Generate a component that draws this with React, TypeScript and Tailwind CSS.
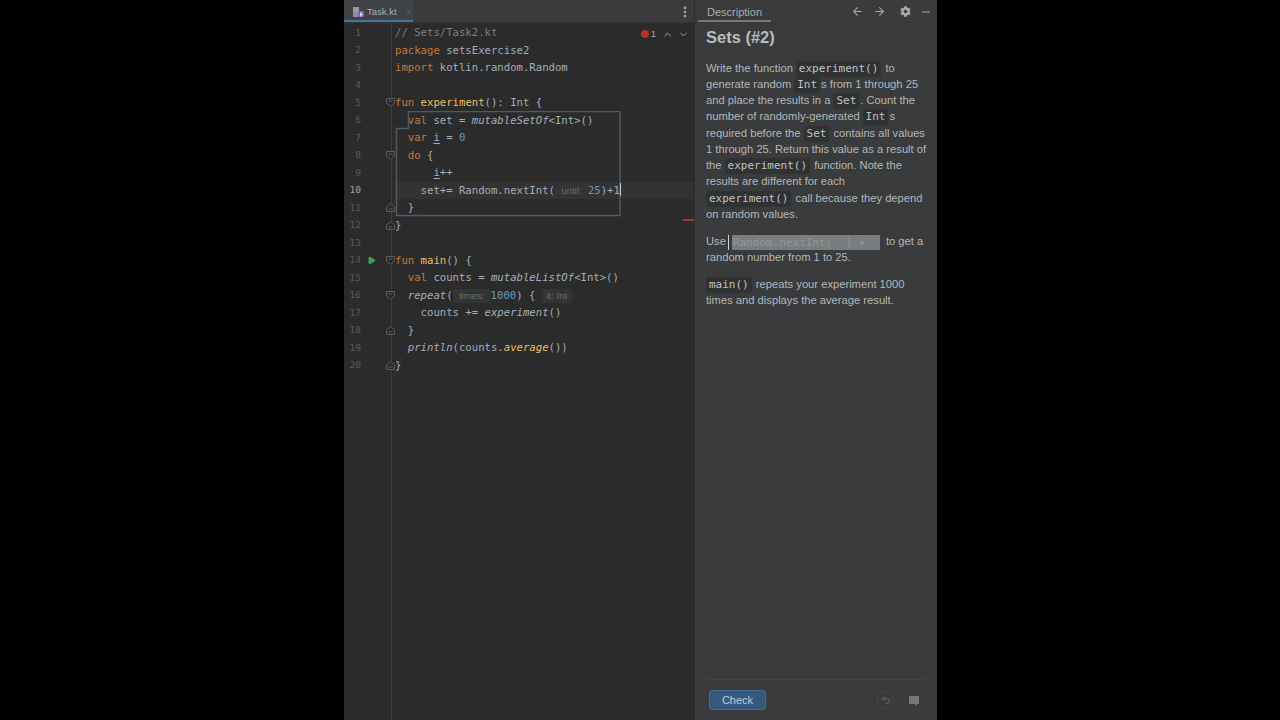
import type { ReactNode } from "react";
import { ArrowLeft, ArrowRight, Minus, MoreVertical, ChevronUp, ChevronDown, Undo2, X, Play } from "lucide-react";
import { FaCog } from "react-icons/fa";

const kw = "text-[#c07a3c]";
const fn = "text-[#e8bf6a]";

function K({ children }: { children: ReactNode }) {
  return <span className={kw}>{children}</span>;
}

function I({ children }: { children: ReactNode }) {
  return <span className="italic">{children}</span>;
}

function U({ children }: { children: ReactNode }) {
  return <span className="underline underline-offset-2">{children}</span>;
}

function Hint({ w, children }: { w: string; children: string }) {
  return (
    <span className={`inline-block rounded-[2px] bg-[#333435] text-center font-['Liberation_Sans',sans-serif] text-[9.5px] leading-[14px] not-italic text-[#6c6f71] ${w}`}>
      {children}
    </span>
  );
}

function Fold({ kind }: { kind: "open" | "close" }) {
  return (
    <svg width="9" height="9" viewBox="0 0 9 9" className="bg-[#2b2b2b]" fill="none" stroke="#5a5d5f">
      {kind === "open" ? <path d="M.5.5h8v4.5L4.5 8.5.5 5zM2.5 3h4" /> : <path d="M.5 8.5h8V4L4.5.5.5 4zM2.5 6h4" />}
    </svg>
  );
}

type Line = { code?: ReactNode; fold?: "open" | "close"; run?: boolean; current?: boolean };

const lines: Line[] = [
  { code: <span className="text-[#7c7e80]">// Sets/Task2.kt</span> },
  { code: <><K>package</K> setsExercise2</> },
  { code: <><K>import</K> kotlin.random.Random</> },
  {},
  { code: <><K>fun</K> <span className={fn}>experiment</span>(): Int {"{"}</>, fold: "open" },
  { code: <>  <K>val</K> set = <I>mutableSetOf</I>{"<Int>()"}</> },
  { code: <>  <K>var</K> <U>i</U> = <span className="text-[#6897bb]">0</span></> },
  { code: <>  <K>do</K> {"{"}</>, fold: "open" },
  { code: <>      <U>i</U>++</> },
  {
    code: <>    set+= Random.nextInt(<Hint w="w-[33px]">until:</Hint><span className="text-[#6897bb]">25</span>)+1</>,
    current: true,
  },
  { code: <>  {"}"}</>, fold: "close" },
  { code: "}", fold: "close" },
  {},
  { code: <><K>fun</K> <span className={fn}>main</span>() {"{"}</>, fold: "open", run: true },
  { code: <>  <K>val</K> counts = <I>mutableListOf</I>{"<Int>()"}</> },
  {
    code: <>  <I>repeat</I>(<Hint w="w-[38px]">times:</Hint><span className="text-[#6897bb]">1000</span>) {"{"} <Hint w="w-[30px]">it: Int</Hint></>,
    fold: "open",
  },
  { code: <>    counts += <I>experiment</I>()</> },
  { code: <>  {"}"}</>, fold: "close" },
  { code: <>  <I>println</I>(counts.<I><span className={fn}>average</span></I>())</> },
  { code: "}", fold: "close" },
];

function CodeRow({ line, n }: { line: Line; n: number }) {
  return (
    <div className="flex h-[17.53px] items-center">
      <div className={`w-[17px] shrink-0 text-right text-[9.5px] ${line.current ? "text-[#a4a3a3]" : "text-[#565a5c]"}`}>{n}</div>
      <div className="flex w-[25px] shrink-0 items-center pl-[6px]">
        {line.run && <Play size={9} className="fill-[#499c54] text-[#499c54]" />}
      </div>
      <div className="flex w-[9px] shrink-0 items-center justify-center">{line.fold && <Fold kind={line.fold} />}</div>
      <div className={`h-full min-w-0 flex-1 whitespace-pre leading-[17.53px] text-[#a3afba] ${line.current ? "bg-[#323232]" : ""}`}>{line.code}</div>
    </div>
  );
}

function Code({ children }: { children: string }) {
  return (
    <code className="ml-[3px] mr-[1px] inline-block rounded-[3px] bg-[#2f3132] px-[3px] font-['DejaVu_Sans_Mono',monospace] text-[11px] leading-[16px] text-[#c0c3c5]">
      {children}
    </code>
  );
}

function TextLine({ children }: { children: ReactNode }) {
  return <div className="h-[16.25px] whitespace-pre leading-[16.25px]">{children}</div>;
}

export default function App() {
  return (
    <div className="flex h-[720px] overflow-hidden bg-black pl-[344px] font-['Liberation_Sans',sans-serif]">
      <div className="flex h-full w-[593px] bg-[#393b3c]">
        {/* editor */}
        <div className="relative flex w-[350px] shrink-0 flex-col bg-[#2b2b2b]">
          <div className="flex h-[23px] shrink-0 items-stretch justify-between border-b border-[#333536] bg-[#393b3d]">
            <div className="flex w-[69px] items-center gap-[3px] border-b-2 border-[#47729b] bg-[#404345] pl-[9px] pt-[4px]">
              <svg width="11" height="12" viewBox="0 0 11 12">
                <rect x="0" y="1" width="6" height="5" fill="#9a9ca0" />
                <rect x="0" y="6" width="5" height="5" fill="#8d8fa0" />
                <path d="M5 5h6v6H5z" fill="#8a5fc2" />
                <path d="M7 6l3 2.5L7 11z" fill="#d6d8e8" />
              </svg>
              <span className="text-[9.5px] text-[#a9adb0]">Task.kt</span>
              <X size={8} className="ml-[5px] text-[#5f6264]" />
            </div>
            <div className="flex items-center pr-[2px] pt-[1px]">
              <MoreVertical size={14} strokeWidth={2.5} className="text-[#a5a8aa]" />
            </div>
          </div>

          <div className="relative flex-1 pt-[1px] font-['DejaVu_Sans_Mono',monospace] text-[10.63px]">
            <div className="absolute bottom-0 left-[47px] top-0 w-px bg-[#3b3d3e]" />
            <div className="relative">
              {lines.map((line, i) => (
                <CodeRow key={i} line={line} n={i + 1} />
              ))}
            </div>
            {/* error counter */}
            <div className="absolute right-[5px] top-[4px] flex items-center text-[#a5a8aa]">
              <span className="h-[8px] w-[8px] rounded-full bg-[#b3312f]" />
              <span className="ml-[2px] font-['Liberation_Sans',sans-serif] text-[9.5px]">1</span>
              <ChevronUp size={11} className="ml-[6px]" />
              <ChevronDown size={11} className="ml-[5px]" />
            </div>
            {/* selection frame */}
            <svg className="absolute left-[50px] top-[88px]" width="230" height="106" fill="none">
              <path d="M14.5.5H226V104.5H2.5V17.5H14.5z" stroke="#4c5b63" strokeWidth="1.5" />
            </svg>
            <div className="absolute left-[276px] top-[160px] h-[13px] w-px bg-[#c5cbd0]" />
            <div className="absolute left-[72px] top-[192px] h-px w-[5px] bg-[#8a3a33]" />
            <div className="absolute right-0 top-[196px] h-[2px] w-[11px] bg-[#b5332c]" />
          </div>
        </div>

        <div className="w-px shrink-0 bg-[#2a2c2d]" />

        {/* description panel */}
        <div className="flex min-w-0 flex-1 flex-col text-[11.2px] text-[#b4b7b9]">
          <div className="flex h-[23px] shrink-0 items-center justify-between border-b border-[#333536] pl-[3px] pr-[5px]">
            <div className="flex h-full w-[73px] items-center justify-center border-b-2 border-[#777a7c] pt-[4px] text-[11px] text-[#a9acae]">
              Description
            </div>
            <div className="flex items-center pt-[1px] text-[#a5a8aa]">
              <ArrowLeft size={13} strokeWidth={2} />
              <ArrowRight size={13} strokeWidth={2} className="ml-[9px]" />
              <FaCog size={11} className="ml-[14px]" />
              <Minus size={12} strokeWidth={2} className="ml-[9px]" />
            </div>
          </div>

          <div className="flex-1 pl-[11px] pt-[4px]">
            <h1 className="text-[16.5px] font-bold leading-[21px] text-[#b9bcbe]">Sets (#2)</h1>
            <div className="mt-[11.5px]">
              <TextLine>Write the function<Code>experiment()</Code> to</TextLine>
              <TextLine>generate random<Code>Int</Code>s from 1 through 25</TextLine>
              <TextLine>and place the results in a<Code>Set</Code>. Count the</TextLine>
              <TextLine>number of randomly-generated<Code>Int</Code>s</TextLine>
              <TextLine>required before the<Code>Set</Code> contains all values</TextLine>
              <TextLine>1 through 25. Return this value as a result of</TextLine>
              <TextLine>the<Code>experiment()</Code> function. Note the</TextLine>
              <TextLine>results are different for each</TextLine>
              <div className="ml-[-3px]">
                <TextLine><Code>experiment()</Code> call because they depend</TextLine>
              </div>
              <TextLine>on random values.</TextLine>
            </div>
            <div className="mt-[11px]">
              <TextLine>
                Use
                <span className="ml-[2px] inline-block h-[15px] w-[1px] bg-[#d0d3d5] align-middle" />
                <code className="ml-[3px] mr-[6px] inline-block h-[15px] w-[148px] rounded-[1px] bg-[#7a7d7f] px-[1px] align-middle font-['DejaVu_Sans_Mono',monospace] text-[11px] leading-[15px] text-[#94979a]">
                  Random.nextInt(  ) +
                </code>
                to get a
              </TextLine>
              <TextLine>random number from 1 to 25.</TextLine>
            </div>
            <div className="mt-[10.5px]">
              <div className="ml-[-3px]">
                <TextLine><Code>main()</Code> repeats your experiment 1000</TextLine>
              </div>
              <TextLine>times and displays the average result.</TextLine>
            </div>
          </div>

          <div className="mx-[11px] flex h-[41px] shrink-0 items-center justify-between border-t border-[#414344] pl-[3px] pr-[6px]">
            <button className="h-[20px] w-[57px] rounded-[3px] border border-[#456b8e] bg-[#365880] text-[11px] text-[#c5cdd5]">
              Check
            </button>
            <div className="flex items-center">
              <div className="flex h-[17px] w-[17px] items-center justify-center rounded-[3px] border border-[#434547]">
                <Undo2 size={10} className="text-[#6b6e70]" />
              </div>
              <svg width="11" height="11" viewBox="0 0 11 11" className="ml-[15px]">
                <path d="M0 1h10v8H8v2L6 9H0z" fill="#75787a" />
              </svg>
            </div>
          </div>
        </div>
      </div>
    </div>
  );
}
